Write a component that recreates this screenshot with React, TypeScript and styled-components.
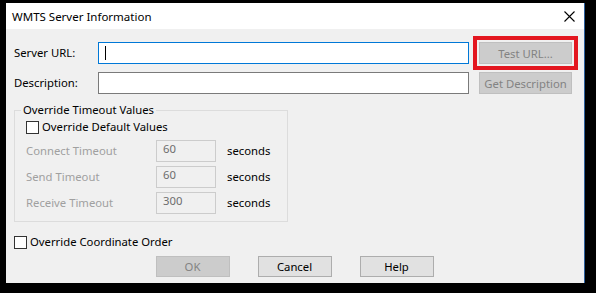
import React from 'react';
import styled, { createGlobalStyle } from 'styled-components';

const GlobalStyle = createGlobalStyle`
  html, body {
    margin: 0;
    padding: 0;
    background: #000;
  }
  body {
    font-family: "Noto Sans", "Open Sans", sans-serif;
    font-size: 11.3px;
  }
`;

type TimeoutRow = {
  label: string;
  value: string;
};

const timeouts: TimeoutRow[] = [
  { label: 'Connect Timeout', value: '60' },
  { label: 'Send Timeout', value: '60' },
  { label: 'Receive Timeout', value: '300' },
];

const App = () => {
  return (
    <>
      <GlobalStyle />
      <Page>
        <Window>
          <TitleBar>
            <Title>WMTS Server Information</Title>
            <CloseIcon viewBox="0 0 11 11" width="11" height="11">
              <path d="M0.5 0.5 L10.5 10.5 M10.5 0.5 L0.5 10.5" stroke="#000" strokeWidth="1.1" />
            </CloseIcon>
          </TitleBar>
          <Body>
            <FormGrid>
              <FieldLabel>Server URL:</FieldLabel>
              <TextBox $focused>
                <Caret />
              </TextBox>
              <Highlight>
                <DialogButton disabled>Test URL...</DialogButton>
              </Highlight>
              <FieldLabel>Description:</FieldLabel>
              <TextBox />
              <DialogButton disabled>Get Description</DialogButton>
            </FormGrid>

            <Group>
              <Legend>Override Timeout Values</Legend>
              <CheckRow>
                <CheckBox />
                <span>Override Default Values</span>
              </CheckRow>
              <TimeoutGrid>
                {timeouts.map((t) => (
                  <React.Fragment key={t.label}>
                    <DimLabel>{t.label}</DimLabel>
                    <NumberBox>{t.value}</NumberBox>
                    <Unit>seconds</Unit>
                  </React.Fragment>
                ))}
              </TimeoutGrid>
            </Group>

            <CoordRow>
              <CheckBox />
              <span>Override Coordinate Order</span>
            </CoordRow>

            <ButtonBar>
              <FooterButton disabled>OK</FooterButton>
              <FooterButton>Cancel</FooterButton>
              <FooterButton>Help</FooterButton>
            </ButtonBar>
          </Body>
        </Window>
      </Page>
    </>
  );
};

const Page = styled.div`
  width: 596px;
  height: 293px;
  padding: 3px 0 0 6px;
  box-sizing: border-box;
  background: #000;
`;

const Window = styled.div`
  width: 579px;
  height: 280px;
  background: #f0f0f0;
  border-right: 1px solid #2d5f9c;
  box-sizing: border-box;
  display: flex;
  flex-direction: column;
  color: #000;
`;

const TitleBar = styled.div`
  height: 26px;
  background: #fff;
  display: flex;
  align-items: center;
  justify-content: space-between;
  padding: 0 9px 0 6px;
  flex-shrink: 0;
`;

const Title = styled.span`
  font-size: 11.5px;
  line-height: 16px;
  margin-top: 1px;
`;

const CloseIcon = styled.svg`
  display: block;
  margin-top: 1px;
`;

const Body = styled.div`
  flex: 1;
  padding: 13px 11px 0 8px;
  display: flex;
  flex-direction: column;
`;

const FormGrid = styled.div`
  display: grid;
  grid-template-columns: 74px 371px 93px;
  column-gap: 10px;
  row-gap: 8px;
  align-items: center;
`;

const FieldLabel = styled.span`
  line-height: 16px;
`;

const TextBox = styled.div<{ $focused?: boolean }>`
  height: 22px;
  box-sizing: border-box;
  background: #fff;
  border: 1px solid ${(p) => (p.$focused ? '#0078d7' : '#7a7a7a')};
  display: flex;
  align-items: center;
  padding-left: 6px;
`;

const Caret = styled.span`
  width: 1px;
  height: 14px;
  background: #000;
`;

const Highlight = styled.div`
  outline: 4px solid #e3161f;
  outline-offset: 2px;
  display: flex;
`;

const DialogButton = styled.button`
  width: 93px;
  height: 22px;
  box-sizing: border-box;
  margin: 0;
  padding: 0;
  font-family: inherit;
  font-size: 11.3px;
  background: ${(p) => (p.disabled ? '#cccccc' : '#e1e1e1')};
  border: 1px solid ${(p) => (p.disabled ? '#bfbfbf' : '#adadad')};
  color: ${(p) => (p.disabled ? '#838383' : '#000')};
`;

const Group = styled.fieldset`
  margin: 8px 0 0 0;
  width: 274px;
  box-sizing: border-box;
  border: 1px solid #dcdcdc;
  padding: 0 11px 7px 11px;
`;

const Legend = styled.legend`
  padding: 0 2px;
  margin-left: -5px;
  line-height: 16px;
`;

const CheckRow = styled.label`
  display: flex;
  align-items: center;
  gap: 3px;
  height: 16px;
  margin-top: 1px;
  line-height: 16px;
`;

const CheckBox = styled.span`
  width: 13px;
  height: 13px;
  box-sizing: border-box;
  border: 1px solid #333;
  background: #fff;
  flex-shrink: 0;
`;

const TimeoutGrid = styled.div`
  display: grid;
  grid-template-columns: 119px 60px auto;
  column-gap: 11px;
  row-gap: 4px;
  align-items: center;
  margin-top: 5px;
`;

const DimLabel = styled.span`
  color: #a0a0a0;
  line-height: 16px;
`;

const NumberBox = styled.div`
  height: 22px;
  box-sizing: border-box;
  border: 1px solid #cccccc;
  background: #f0f0f0;
  color: #6d6d6d;
  padding: 1px 0 0 6px;
  line-height: 14px;
`;

const Unit = styled.span`
  line-height: 16px;
`;

const CoordRow = styled(CheckRow)`
  margin-top: 12px;
`;

const ButtonBar = styled.div`
  display: flex;
  justify-content: center;
  gap: 28px;
  margin-top: 6px;
  padding-left: 2px;
`;

const FooterButton = styled(DialogButton)`
  width: 74px;
  height: 21px;
`;

export default App;
